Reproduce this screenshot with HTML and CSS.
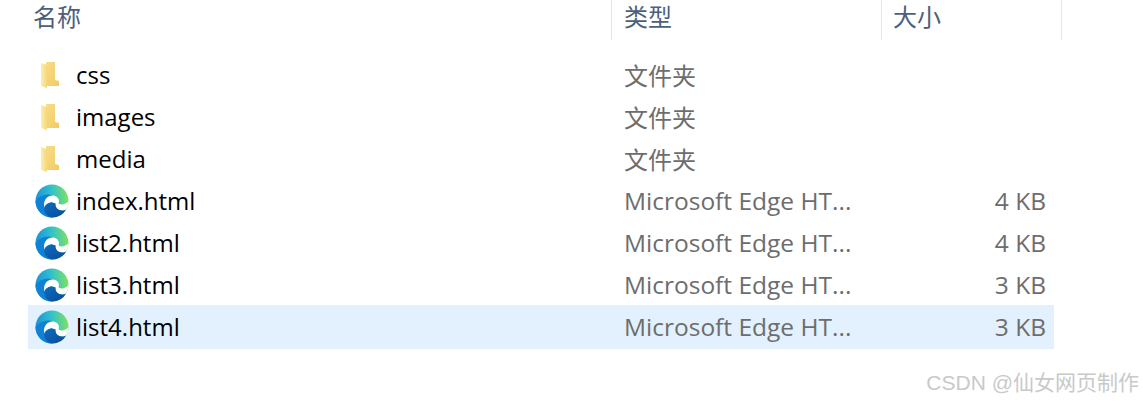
FILE: index.html
```html
<!DOCTYPE html>
<html lang="zh-CN">
<head>
  <meta charset="UTF-8">
  <title>文件列表</title>
  <link rel="stylesheet" href="styles.css">
</head>
<body>
  <svg class="defs" width="0" height="0" aria-hidden="true">
    <defs>
      <linearGradient id="folder-back" x1="0" y1="0" x2="1" y2="1">
        <stop offset="0" stop-color="#f8dc88"/>
        <stop offset="1" stop-color="#f2cb62"/>
      </linearGradient>
      <linearGradient id="folder-front" x1="0" y1="0" x2="1" y2="0">
        <stop offset="0" stop-color="#fdeeb4"/>
        <stop offset="1" stop-color="#f6d678"/>
      </linearGradient>
      <linearGradient id="edge-top" x1="0" y1="0.6" x2="1" y2="0.5">
        <stop offset="0" stop-color="#1b8fd8"/>
        <stop offset="0.5" stop-color="#2fc0cc"/>
        <stop offset="1" stop-color="#7fe066"/>
      </linearGradient>
      <linearGradient id="edge-low" x1="0" y1="0" x2="1" y2="1">
        <stop offset="0" stop-color="#0d6cc0"/>
        <stop offset="1" stop-color="#0a4a96"/>
      </linearGradient>
      <symbol id="icon-folder" viewBox="0 0 20 26">
        <path d="M6 0H15V18L19 19V24H6Z" fill="url(#folder-back)"/>
        <path d="M1 1L7 3V26L1 24Z" fill="url(#folder-front)"/>
      </symbol>
      <symbol id="icon-edge" viewBox="0 0 34 34">
        <circle cx="17" cy="17" r="16.500" fill="url(#edge-top)"/>
        <path d="M.5 17C.5 26 8 33.500 17 33.500L20 20L18 11.500C12 9 5 11 .5 17Z" fill="#0f82d6"/>
        <path d="M33.500 17C31 20.500 26 21.500 23.500 19.500C25 16 23 12 18 11.500C13 11 9.500 15 9 20L9.200 24C10 21 13 18.500 17 18.500L20.500 19.500C20 23.500 23 26.500 27 26.500C29 26.500 30.300 26 31.300 25.200A16.500 16.500 0 0 0 33.500 17Z" fill="white"/>
        <path d="M9.200 24C10 21 13 18.500 17 18.500L20.500 19.500C20 23.500 23 26.500 27 26.500C29 26.500 30.300 26 31.300 25.200A16.500 16.500 0 0 1 17 33.500C12 32.500 8.800 28.500 9.200 24Z" fill="url(#edge-low)"/>
      </symbol>
    </defs>
  </svg>

  <div class="file-list">
    <div class="row head">
      <div class="col col-name">名称</div>
      <div class="col col-type">类型</div>
      <div class="col col-size">大小</div>
    </div>

    <div class="rows">
      <div class="row">
        <div class="col col-name"><svg class="icon folder"><use href="#icon-folder"/></svg>css</div>
        <div class="col col-type cjk">文件夹</div>
        <div class="col col-size"></div>
      </div>
      <div class="row">
        <div class="col col-name"><svg class="icon folder"><use href="#icon-folder"/></svg>images</div>
        <div class="col col-type cjk">文件夹</div>
        <div class="col col-size"></div>
      </div>
      <div class="row">
        <div class="col col-name"><svg class="icon folder"><use href="#icon-folder"/></svg>media</div>
        <div class="col col-type cjk">文件夹</div>
        <div class="col col-size"></div>
      </div>
      <div class="row">
        <div class="col col-name"><svg class="icon edge"><use href="#icon-edge"/></svg>index.html</div>
        <div class="col col-type">Microsoft Edge HT...</div>
        <div class="col col-size">4 KB</div>
      </div>
      <div class="row">
        <div class="col col-name"><svg class="icon edge"><use href="#icon-edge"/></svg>list2.html</div>
        <div class="col col-type">Microsoft Edge HT...</div>
        <div class="col col-size">4 KB</div>
      </div>
      <div class="row">
        <div class="col col-name"><svg class="icon edge"><use href="#icon-edge"/></svg>list3.html</div>
        <div class="col col-type">Microsoft Edge HT...</div>
        <div class="col col-size">3 KB</div>
      </div>
      <div class="row selected">
        <div class="col col-name"><svg class="icon edge"><use href="#icon-edge"/></svg>list4.html</div>
        <div class="col col-type">Microsoft Edge HT...</div>
        <div class="col col-size">3 KB</div>
      </div>
    </div>
  </div>

  <div class="watermark">CSDN @仙女网页制作</div>
</body>
</html>
```

FILE: styles.css
```css
html, body {
  height: 100%;
}
body {
  margin: 0;
  position: relative;
  overflow: hidden;
  background-color: white;
  font-family: "Open Sans", "Noto Sans CJK SC", sans-serif;
  font-size: 24px;
}
.defs {
  position: absolute;
}
.file-list {
  width: 1034px;
  margin-left: 28px;
}
.row {
  display: grid;
  grid-template-columns: 583px 270px 173px;
  height: 42px;
  align-items: center;
}
.col-name {
  display: flex;
  align-items: center;
  color: black;
}
.col-type {
  padding-left: 13px;
  font-size: 24.5px;
  color: #6d6d6d;
}
.col-type.cjk {
  font-size: 24px;
}
.col-size {
  padding-right: 8px;
  text-align: right;
  font-size: 24.5px;
  color: #6d6d6d;
}
.head {
  height: 40px;
  grid-template-columns: 583px 270px 181px;
}
.head .col {
  height: 40px;
  line-height: 34px;
  font-size: 24px;
  color: #4c607a;
}
.head .col-name {
  padding-left: 5px;
  align-items: flex-start;
}
.head .col-type {
  border-left: 1px solid #e5e5e5;
  padding-left: 12px;
}
.head .col-size {
  border-left: 1px solid #e5e5e5;
  border-right: 1px solid #e5e5e5;
  padding: 0 0 0 11px;
  text-align: left;
}
.rows {
  width: 1026px;
  margin-top: 13px;
}
.selected {
  box-sizing: border-box;
  height: 44px;
  padding-bottom: 2px;
  background-color: #e2f1fd;
}
.icon {
  flex: none;
  display: block;
  margin-top: 2px;
}
.folder {
  width: 20px;
  height: 26px;
  margin-left: 12px;
  margin-right: 16px;
}
.edge {
  width: 34px;
  height: 34px;
  margin-left: 7px;
  margin-right: 7px;
}
.watermark {
  position: absolute;
  right: 4px;
  bottom: 7px;
  font-family: "Liberation Sans", "Noto Sans CJK SC", sans-serif;
  font-size: 21px;
  color: #c9c9c9;
  white-space: nowrap;
}
```
